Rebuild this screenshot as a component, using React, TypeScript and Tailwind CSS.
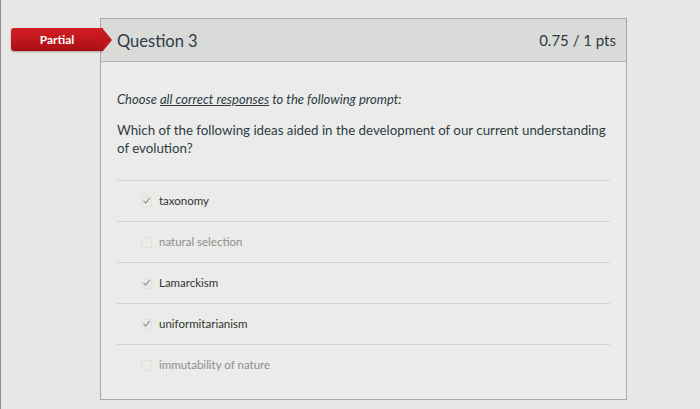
import React from "react";

const options = [
  { label: "taxonomy", checked: true },
  { label: "natural selection", checked: false },
  { label: "Lamarckism", checked: true },
  { label: "uniformitarianism", checked: true },
  { label: "immutability of nature", checked: false },
];

function Check({ checked }: { checked: boolean }) {
  return (
    <span className="w-[11px] h-[11px] flex items-center justify-center rounded-[2px] border border-[#e0e0df]">
      {checked && (
        <svg width="10" height="10" viewBox="0 0 10 10">
          <path d="M2 5.2 L4 7.4 L8.2 2" fill="none" stroke="#959595" strokeWidth="1.4" strokeLinecap="round" strokeLinejoin="round" />
        </svg>
      )}
    </span>
  );
}

export default function App() {
  return (
    <div
      className="w-[700px] h-[409px] bg-[#e7e7e5] overflow-hidden border-l border-[#8c8c8c]"
      style={{ fontFamily: "Lato, 'Open Sans', sans-serif" }}
    >
      <div className="pt-[18px] pl-[99px]">
        <div className="relative w-[527px] h-[382px] border border-[#a9a9a9] bg-[#ebebe9]">
          <div className="absolute left-[-90px] top-[9px] flex items-center">
            <div className="w-[92px] h-[23px] rounded-l-[3px] bg-gradient-to-b from-[#d41e24] to-[#a90f15] flex items-center justify-center text-white text-[12px] font-bold shadow-[0_1px_2px_rgba(0,0,0,0.3)]">
              Partial
            </div>
            <div className="w-0 h-0 border-y-[11.5px] border-y-transparent border-l-[9px] border-l-[#bd161c]" />
          </div>
          <div className="h-[43px] bg-[#dadad9] border-b border-[#b3b3b3] flex items-center justify-between pl-[16px] pr-[10px]">
            <span className="text-[16.5px] text-[#2d3b45] pt-[3px]">Question 3</span>
            <span className="text-[15px] text-[#2d3b45]">0.75 / 1 pts</span>
          </div>
          <div className="px-[16px] pt-[28px]">
            <p className="text-[13px] leading-[18px] italic text-[#2d3b45]">
              Choose <span className="underline">all correct responses</span> to the following prompt:
            </p>
            <p className="mt-[13px] text-[13.3px] leading-[18px] text-[#2d3b45] w-[500px]">
              Which of the following ideas aided in the development of our current understanding of evolution?
            </p>
            <div className="mt-[23px]">
              {options.map((o) => (
                <div key={o.label} className="h-[41px] border-t border-[#d2d2d1] flex items-center pl-[24px] gap-[7px]">
                  <Check checked={o.checked} />
                  <span className={`text-[11.5px] ${o.checked ? "text-[#333333]" : "text-[#8e8e8e]"}`}>{o.label}</span>
                </div>
              ))}
            </div>
          </div>
        </div>
      </div>
    </div>
  );
}
